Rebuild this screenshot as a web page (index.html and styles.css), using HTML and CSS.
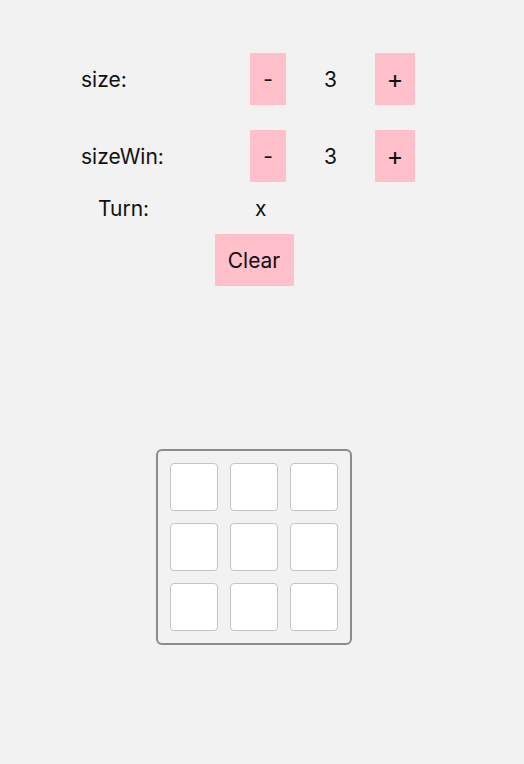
FILE: index.html
```html
<!DOCTYPE html>
<html>
<head>
<meta charset="utf-8">
<link rel="stylesheet" href="styles.css">
</head>
<body>
<div class="app">
  <div class="row setting">
    <span class="label">size:</span>
    <button class="btn small minus">-</button>
    <span class="value">3</span>
    <button class="btn small plus">+</button>
  </div>
  <div class="row setting">
    <span class="label">sizeWin:</span>
    <button class="btn small minus">-</button>
    <span class="value">3</span>
    <button class="btn small plus">+</button>
  </div>
  <div class="row turn">
    <span class="turn-label">Turn:</span>
    <span class="turn-value">x</span>
  </div>
  <div class="center">
    <button class="btn clear">Clear</button>
  </div>
  <div class="center board-wrap">
    <div class="board">
      <div class="cell"></div><div class="cell"></div><div class="cell"></div>
      <div class="cell"></div><div class="cell"></div><div class="cell"></div>
      <div class="cell"></div><div class="cell"></div><div class="cell"></div>
    </div>
  </div>
</div>
</body>
</html>
```

FILE: styles.css
```css
html, body {
  margin: 0;
  padding: 0;
  background: #f2f2f2;
}
body {
  font-family: Inter, "Liberation Sans", sans-serif;
  font-size: 21px;
  color: #111;
}
.app {
  width: 508px;
  padding-top: 53px;
}
.row {
  display: flex;
  align-items: center;
}
.setting {
  height: 52px;
  padding-left: 81px;
  margin-bottom: 25px;
}
.label {
  width: 169px;
}
.value {
  width: 89px;
  text-align: center;
}
.btn {
  font-family: inherit;
  font-size: 21px;
  color: #111;
  background: #ffc0cb;
  border: none;
  border-radius: 0;
  margin: 0;
  padding: 0;
  cursor: pointer;
}
.small {
  height: 52px;
}
.minus { width: 36px; }
.plus {
  width: 40px;
  font-size: 25px;
}
.turn {
  margin-top: -12px;
  height: 26px;
  padding-left: 98px;
}
.turn-label {
  width: 157px;
}
.center {
  display: flex;
  justify-content: center;
}
.clear {
  margin-top: 13px;
  width: 79px;
  height: 52px;
}
.board-wrap {
  margin-top: 163px;
}
.board {
  display: grid;
  grid-template-columns: repeat(3, 48px);
  grid-auto-rows: 48px;
  gap: 12px;
  padding: 12px;
  border: 2px solid #8c8c8c;
  border-radius: 6px;
}
.cell {
  box-sizing: border-box;
  background: #fff;
  border: 1px solid #c4c4c4;
  border-radius: 4px;
}
```
